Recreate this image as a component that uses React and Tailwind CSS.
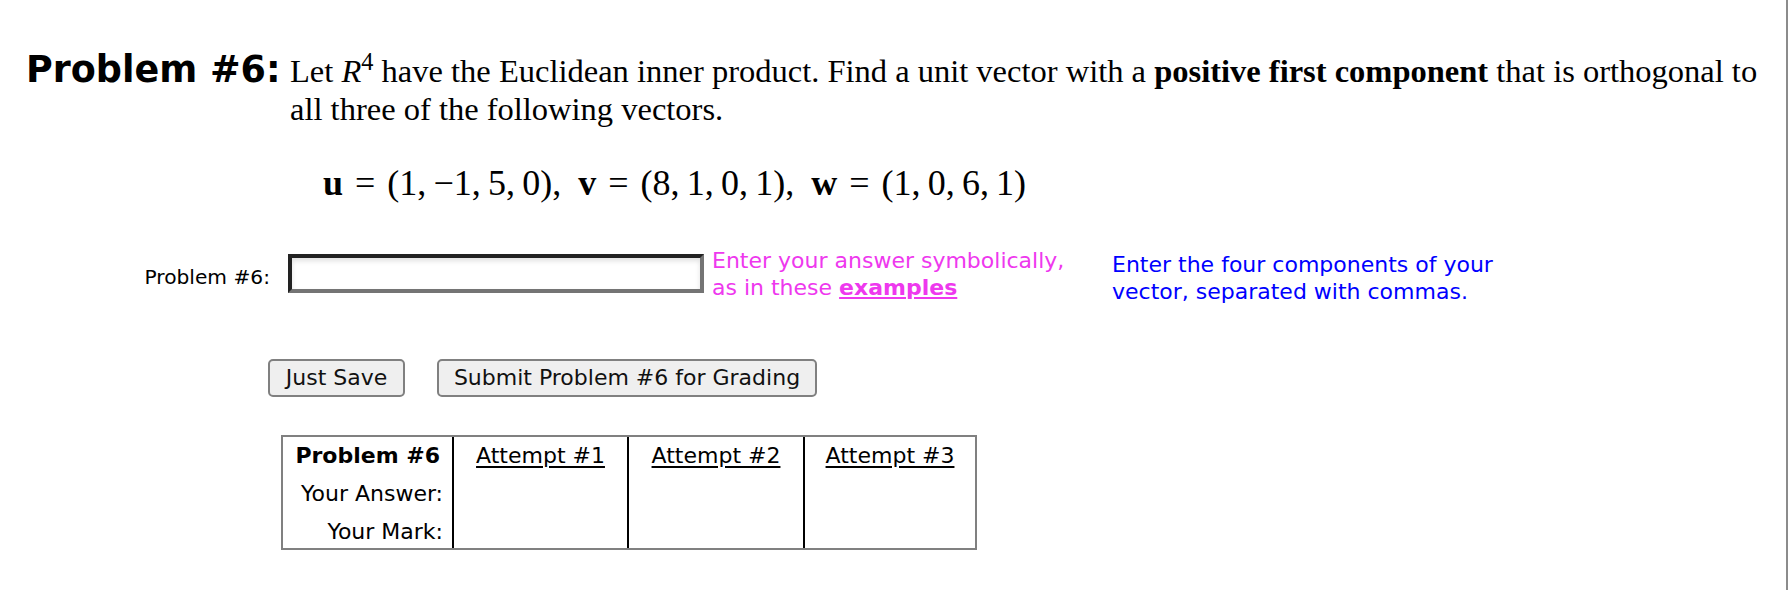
export default function App() {
  const sans = "font-['DejaVu_Sans',Verdana,sans-serif]";
  return (
    <div className="w-[1788px] h-[590px] border-r-2 border-[#8c8c8c] bg-white text-black overflow-hidden">
      {/* Problem statement */}
      <div className="flex items-baseline pt-[49px] pl-[26px]">
        <div className={`w-[264px] shrink-0 font-bold text-[36.5px] leading-[42px] ${sans}`}>
          Problem #6:
        </div>
        <div className="w-[1484px] font-['Liberation_Serif',serif] text-[32.5px] leading-[38px]">
          <p>
            Let <i>R</i>
            <sup>4</sup> have the Euclidean inner product. Find a unit vector with a{" "}
            <b>positive first component</b> that is orthogonal to all three of the following vectors.
          </p>
          <div className="ml-[33px] mt-[35px] text-[36px] leading-[40px] whitespace-nowrap">
            <b>u</b>
            <span className="mx-[12px]">=</span>(1,&thinsp;−1,&thinsp;5,&thinsp;0),
            <span className="ml-[17px]">
              <b>v</b>
            </span>
            <span className="mx-[12px]">=</span>(8,&thinsp;1,&thinsp;0,&thinsp;1),
            <span className="ml-[17px]">
              <b>w</b>
            </span>
            <span className="mx-[12px]">=</span>(1,&thinsp;0,&thinsp;6,&thinsp;1)
          </div>
        </div>
      </div>

      {/* Answer row */}
      <div className={`flex items-start h-[60px] mt-[43px] ${sans}`}>
        <div className="w-[270px] shrink-0 text-right text-[20.2px] leading-[24px] mt-[19px]">Problem #6:</div>
        <input
          type="text"
          className="ml-[18px] mt-[8px] w-[416px] h-[39px] shrink-0 border-4 border-t-[#222] border-l-[#222] border-b-[#747474] border-r-[#747474] bg-white shadow-[inset_0_3px_5px_rgba(0,0,0,0.12)] outline-none"
        />
        <div className="ml-[8px] mt-[1px] w-[360px] shrink-0 text-[22px] leading-[27px] text-[#ee38ee]">
          Enter your answer symbolically, as in these{" "}
          <span className="font-bold underline">examples</span>
        </div>
        <div className="ml-[40px] mt-[5px] w-[410px] shrink-0 text-[22px] leading-[27px] text-[#0000ff]">
          Enter the four components of your vector, separated with commas.
        </div>
      </div>

      {/* Buttons */}
      <div className={`flex mt-[53px] ml-[268px] gap-[32px] ${sans}`}>
        <button className="h-[38px] w-[137px] rounded-[5px] border-2 border-[#808080] bg-[#efefef] text-[22px] leading-[26px] text-[#111]">
          Just Save
        </button>
        <button className="h-[38px] w-[380px] rounded-[5px] border-2 border-[#808080] bg-[#efefef] text-[22px] leading-[26px] text-[#111]">
          Submit Problem #6 for Grading
        </button>
      </div>

      {/* Attempts table */}
      <div className={`mt-[38px] ml-[281px] w-[696px] border-2 border-[#808080] ${sans} text-[22px] leading-[37px]`}>
        <div className="grid grid-cols-[169px_175px_176px_172px]">
          <div className="h-[37px] text-right pr-[12px] font-bold">Problem #6</div>
          <div className="h-[37px] text-center border-l-2 border-black underline underline-offset-[3px]">Attempt #1</div>
          <div className="h-[37px] text-center border-l-2 border-black underline underline-offset-[3px]">Attempt #2</div>
          <div className="h-[37px] text-center border-l-2 border-black underline underline-offset-[3px]">Attempt #3</div>

          <div className="h-[37px] text-right pr-[9px] pt-[1px]">Your Answer:</div>
          <div className="h-[37px] border-l-2 border-black"></div>
          <div className="h-[37px] border-l-2 border-black"></div>
          <div className="h-[37px] border-l-2 border-black"></div>

          <div className="h-[37px] text-right pr-[9px] pt-[2px]">Your Mark:</div>
          <div className="h-[37px] border-l-2 border-black"></div>
          <div className="h-[37px] border-l-2 border-black"></div>
          <div className="h-[37px] border-l-2 border-black"></div>
        </div>
      </div>
    </div>
  );
}
